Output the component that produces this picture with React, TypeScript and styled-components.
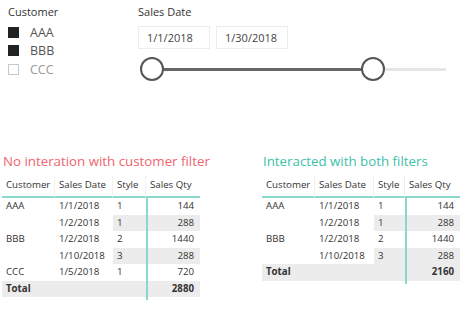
import React from 'react';
import styled, { createGlobalStyle } from 'styled-components';

const GlobalStyle = createGlobalStyle`
  html, body {
    margin: 0;
    padding: 0;
    background: #ffffff;
  }
  body {
    font-family: 'Open Sans', 'Noto Sans', sans-serif;
    color: #333333;
  }
`;

const Page = styled.div`
  width: 474px;
  height: 326px;
  overflow: hidden;
  display: flex;
  flex-direction: column;
`;

const Slicers = styled.div`
  display: flex;
  height: 148px;
  padding-top: 3px;
`;

const CustomerSlicer = styled.div`
  width: 130px;
  padding-left: 8px;
`;

const SlicerTitle = styled.div<{ gap: number }>`
  font-size: 11px;
  line-height: 18px;
  color: #333;
  margin-bottom: ${p => p.gap}px;
`;

const CheckRow = styled.div`
  display: flex;
  align-items: center;
  height: 18.5px;
  font-size: 12.5px;
`;

const CheckBox = styled.span<{ checked: boolean }>`
  width: 11px;
  height: 11px;
  box-sizing: border-box;
  margin-right: 11px;
  background: ${p => (p.checked ? '#222' : '#fff')};
  border: 1px solid ${p => (p.checked ? '#222' : '#c8c8c8')};
`;

const CheckLabel = styled.span<{ checked: boolean }>`
  color: ${p => (p.checked ? '#555' : '#999')};
`;

const DateSlicer = styled.div`
  width: 320px;
`;

const DateInputs = styled.div`
  display: flex;
  gap: 6px;
`;

const DateBox = styled.div`
  width: 72px;
  height: 23px;
  box-sizing: border-box;
  border: 1px solid #ececec;
  font-size: 11px;
  color: #444;
  line-height: 21px;
  padding-left: 8px;
`;

const Slider = styled.div`
  position: relative;
  height: 30px;
  margin-top: 5px;
  width: 310px;
`;

const Track = styled.div<{ from: number; to: number; active: boolean }>`
  position: absolute;
  top: 14px;
  left: ${p => p.from}px;
  width: ${p => p.to - p.from}px;
  height: 3px;
  background: ${p => (p.active ? '#666' : '#e6e6e6')};
`;

const Thumb = styled.div<{ at: number }>`
  position: absolute;
  top: 3px;
  left: ${p => p.at - 12}px;
  width: 24px;
  height: 24px;
  box-sizing: border-box;
  border-radius: 50%;
  border: 2px solid #555;
  background: #fff;
`;

const Visuals = styled.div`
  display: flex;
  padding-left: 2px;
`;

const Visual = styled.div<{ width: number }>`
  width: ${p => p.width}px;
  flex: none;
`;

const VisualTitle = styled.div<{ color: string }>`
  font-size: 13.3px;
  line-height: 20px;
  color: ${p => p.color};
  margin-left: 1px;
  white-space: nowrap;
  height: 24px;
`;

const Grid = styled.div<{ cols: string }>`
  display: grid;
  grid-template-columns: ${p => p.cols};
  font-size: 9.7px;
  color: #333;
`;

const HeadCell = styled.div<{ last?: boolean }>`
  height: 21px;
  line-height: 20px;
  padding-left: 4px;
  border-right: ${p => (p.last ? 'none' : '1px solid #f0f0f0')};
  border-bottom: 2px solid #8ad8cc;
  white-space: nowrap;
`;

const Cell = styled.div<{ shaded?: boolean; right?: boolean; divider?: boolean; bold?: boolean }>`
  height: 16.5px;
  line-height: 16.5px;
  padding: ${p => (p.right ? '0 6px 0 0' : '0 0 0 4px')};
  text-align: ${p => (p.right ? 'right' : 'left')};
  background: ${p => (p.shaded ? '#ececec' : 'transparent')};
  border-left: ${p => (p.divider ? '2px solid #8ad8cc' : 'none')};
  font-weight: ${p => (p.bold ? 700 : 400)};
  white-space: nowrap;
`;

const Tail = styled.div<{ divider?: boolean }>`
  height: 3px;
  border-left: ${p => (p.divider ? '2px solid #8ad8cc' : 'none')};
`;

type Row = { customer: string; date: string; style: string; qty: string };

interface TableProps {
  cols: string;
  rows: Row[];
  total: string;
}

const SalesTable: React.FC<TableProps> = ({ cols, rows, total }) => (
  <Grid cols={cols}>
    <HeadCell>Customer</HeadCell>
    <HeadCell>Sales Date</HeadCell>
    <HeadCell>Style</HeadCell>
    <HeadCell last>Sales Qty</HeadCell>
    {rows.map((r, i) => {
      const shaded = i % 2 === 1;
      return (
        <React.Fragment key={i}>
          <Cell>{r.customer}</Cell>
          <Cell>{r.date}</Cell>
          <Cell shaded={shaded}>{r.style}</Cell>
          <Cell shaded={shaded} right divider>{r.qty}</Cell>
        </React.Fragment>
      );
    })}
    <Cell shaded bold>Total</Cell>
    <Cell shaded />
    <Cell shaded />
    <Cell shaded right divider bold>{total}</Cell>
    <Tail />
    <Tail />
    <Tail />
    <Tail divider />
  </Grid>
);

const allRows: Row[] = [
  { customer: 'AAA', date: '1/1/2018', style: '1', qty: '144' },
  { customer: '', date: '1/2/2018', style: '1', qty: '288' },
  { customer: 'BBB', date: '1/2/2018', style: '2', qty: '1440' },
  { customer: '', date: '1/10/2018', style: '3', qty: '288' },
  { customer: 'CCC', date: '1/5/2018', style: '1', qty: '720' },
];

const filteredRows = allRows.slice(0, 4);

const customers = [
  { name: 'AAA', checked: true },
  { name: 'BBB', checked: true },
  { name: 'CCC', checked: false },
];

export default function App() {
  return (
    <Page>
      <GlobalStyle />
      <Slicers>
        <CustomerSlicer>
          <SlicerTitle gap={2}>Customer</SlicerTitle>
          {customers.map(c => (
            <CheckRow key={c.name}>
              <CheckBox checked={c.checked} />
              <CheckLabel checked={c.checked}>{c.name}</CheckLabel>
            </CheckRow>
          ))}
        </CustomerSlicer>
        <DateSlicer>
          <SlicerTitle gap={5}>Sales Date</SlicerTitle>
          <DateInputs>
            <DateBox>1/1/2018</DateBox>
            <DateBox>1/30/2018</DateBox>
          </DateInputs>
          <Slider>
            <Track from={14} to={235} active />
            <Track from={235} to={308} active={false} />
            <Thumb at={14} />
            <Thumb at={235} />
          </Slider>
        </DateSlicer>
      </Slicers>
      <Visuals>
        <Visual width={260}>
          <VisualTitle color="#f0646e">No interation with customer filter</VisualTitle>
          <SalesTable cols="53px 58px 33px 54px" rows={allRows} total="2880" />
        </Visual>
        <Visual width={210}>
          <VisualTitle color="#3dbfa8">Interacted with both filters</VisualTitle>
          <SalesTable cols="53px 59px 31px 55px" rows={filteredRows} total="2160" />
        </Visual>
      </Visuals>
    </Page>
  );
}
